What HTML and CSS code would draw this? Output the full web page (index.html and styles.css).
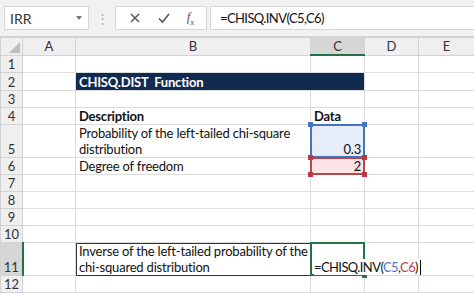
FILE: index.html
```html
<!DOCTYPE html>
<html lang="en">
<head>
  <meta charset="UTF-8">
  <title>CHISQ.INV</title>
  <link rel="stylesheet" href="styles.css">
</head>
<body>
  <div class="toolbar">
    <div class="name-box">
      <span>IRR</span>
      <span class="caret"></span>
    </div>
    <div class="grip">&#8942;</div>
    <div class="fx-buttons">
      <svg width="14" height="14" viewBox="0 0 14 14"><path d="M3 3 L11 11 M11 3 L3 11" stroke="#555" stroke-width="1.5" fill="none"/></svg>
      <svg width="14" height="14" viewBox="0 0 14 14"><path d="M2 7.5 L5.5 11 L12 3" stroke="#555" stroke-width="1.6" fill="none"/></svg>
      <span class="fx">f<sub>x</sub></span>
    </div>
    <div class="formula-input">=CHISQ.INV(C5,C6)</div>
  </div>

  <div class="grid-wrap">
    <table class="sheet">
      <colgroup>
        <col class="c-head">
        <col class="c-a">
        <col class="c-b">
        <col class="c-c">
        <col class="c-d">
        <col class="c-e">
      </colgroup>
      <tr class="hdr">
        <th class="corner"><span class="tri"></span></th>
        <th>A</th>
        <th>B</th>
        <th class="on-col">C</th>
        <th>D</th>
        <th>E</th>
      </tr>
      <tr><th>1</th><td></td><td></td><td></td><td></td><td></td></tr>
      <tr class="r2"><th>2</th><td></td><td colspan="2" class="title">CHISQ.DIST&nbsp; Function</td><td></td><td></td></tr>
      <tr><th>3</th><td></td><td></td><td></td><td></td><td></td></tr>
      <tr><th>4</th><td></td><td class="bold">Description</td><td class="bold">Data</td><td></td><td></td></tr>
      <tr class="tall">
        <th>5</th><td></td>
        <td>Probability of the left-tailed chi-square<br>distribution</td>
        <td class="num ref-blue">0.3
          <span class="sel blue"><i class="tl"></i><i class="tr"></i><i class="bl"></i><i class="br"></i></span>
        </td>
        <td></td><td></td>
      </tr>
      <tr>
        <th>6</th><td></td>
        <td>Degree of freedom</td>
        <td class="num ref-red">2
          <span class="sel red"><i class="tl"></i><i class="tr"></i><i class="bl"></i><i class="br"></i></span>
        </td>
        <td></td><td></td>
      </tr>
      <tr><th>7</th><td></td><td></td><td></td><td></td><td></td></tr>
      <tr><th>8</th><td></td><td></td><td></td><td></td><td></td></tr>
      <tr><th>9</th><td></td><td></td><td></td><td></td><td></td></tr>
      <tr><th>10</th><td></td><td></td><td></td><td></td><td></td></tr>
      <tr class="tall">
        <th class="on-row">11</th><td></td>
        <td class="boxed">Inverse of the left-tailed probability of the<br>chi-squared distribution</td>
        <td class="active"><span class="edit">=CHISQ.INV(<span class="t-blue">C5</span>,<span class="t-red">C6</span>)<span class="cursor"></span></span><span class="sel green"><i class="br"></i></span></td>
        <td></td><td></td>
      </tr>
      <tr><th>12</th><td></td><td></td><td></td><td></td><td></td></tr>
    </table>
  </div>
</body>
</html>
```

FILE: styles.css
```css
body {
  margin: 0;
  width: 474px;
  height: 295px;
  overflow: hidden;
  background: #fff;
  font-family: Lato, "Liberation Sans", sans-serif;
  color: #111;
}

/* formula bar */
.toolbar {
  display: flex;
  align-items: center;
  height: 37px;
  background: #f1f1f1;
  border-bottom: 1px solid #d4d4d4;
  box-sizing: border-box;
  padding: 0 0 0 4px;
}
.name-box {
  width: 85px;
  height: 24px;
  box-sizing: border-box;
  background: #fff;
  border: 1px solid #d6d6d6;
  display: flex;
  align-items: center;
  justify-content: space-between;
  padding: 0 6px 0 5px;
  font-size: 14px;
  color: #333;
}
.caret {
  width: 0;
  height: 0;
  border-left: 3px solid transparent;
  border-right: 3px solid transparent;
  border-top: 4px solid #777;
}
.grip {
  width: 26px;
  text-align: center;
  color: #aaa;
  font-size: 13px;
}
.fx-buttons {
  width: 92px;
  height: 24px;
  box-sizing: border-box;
  background: #fff;
  border: 1px solid #d6d6d6;
  display: flex;
  align-items: center;
  justify-content: space-around;
  padding: 0 4px;
}
.fx {
  font-family: "Liberation Serif", serif;
  font-style: italic;
  font-size: 13px;
  color: #555;
}
.fx sub {
  font-size: 9px;
}
.formula-input {
  flex: 1;
  height: 24px;
  margin-left: 3px;
  box-sizing: border-box;
  background: #fff;
  border: 1px solid #d6d6d6;
  border-right: none;
  padding: 3px 0 0 9px;
  font-size: 13px;
  letter-spacing: -0.6px;
}

/* grid */
.grid-wrap {
  height: 258px;
  overflow: hidden;
}
.sheet {
  border-collapse: collapse;
  table-layout: fixed;
  width: 474px;
  font-size: 13px;
  letter-spacing: -0.2px;
}
.c-head { width: 22px; }
.c-a { width: 53px; }
.c-b { width: 235px; }
.c-c { width: 54px; }
.c-d { width: 54px; }
.c-e { width: 56px; }

.sheet td, .sheet th {
  border: 1px solid #dcdcdc;
  padding: 0 3px 0 3px;
  height: 16px;
  vertical-align: bottom;
  line-height: 16px;
  white-space: nowrap;
  position: relative;
}
.sheet th {
  background: #efefef;
  border-color: #d2d2d2;
  font-weight: normal;
  font-size: 13px;
  letter-spacing: 0;
  color: #333;
  text-align: center;
  padding: 0;
}
.hdr th {
  height: 16px;
  vertical-align: middle;
}
.corner .tri {
  position: absolute;
  right: 2px;
  bottom: 2px;
  width: 0;
  height: 0;
  border-left: 11px solid transparent;
  border-bottom: 11px solid #bdbdbd;
}
.sheet th.on-col {
  background: #d6d6d6;
  border-bottom: 2px solid #217346;
}
.sheet th.on-row {
  background: #d6d6d6;
  border-right: 2px solid #217346;
}
.tall td, .tall th {
  height: 32px;
}
.r2 td { height: 17px; }

.title {
  background: #102a50;
  color: #fff;
  font-weight: bold;
}
.bold { font-weight: bold; }
.num { text-align: right; }

.ref-blue { background: #e6edf9; }
.ref-red { background: #fbe4e6; }

.sel {
  position: absolute;
  left: -1px;
  top: -1px;
  right: -1px;
  bottom: -1px;
  border: 2px solid;
  pointer-events: none;
}
.sel.blue { border-color: #4472c4; }
.sel.red { border-color: #c0424b; }
.sel.green { border-color: #217346; }
.sel i {
  position: absolute;
  width: 5px;
  height: 5px;
}
.sel.blue i { background: #4472c4; }
.sel.red i { background: #b73a44; }
.sel.green i { background: #217346; }
.sel .tl { left: -4px; top: -4px; }
.sel .tr { right: -4px; top: -4px; }
.sel .bl { left: -4px; bottom: -4px; }
.sel .br { right: -4px; bottom: -4px; }

.boxed {
  outline: 1px solid #333;
  outline-offset: -1px;
}
.edit {
  position: relative;
  z-index: 2;
  background: #fff;
  letter-spacing: -0.6px;
}
.t-blue { color: #4a78c2; }
.t-red { color: #c0424b; }
.cursor {
  display: inline-block;
  width: 1px;
  height: 15px;
  background: #000;
  margin-left: 2px;
  vertical-align: -3px;
}
```
